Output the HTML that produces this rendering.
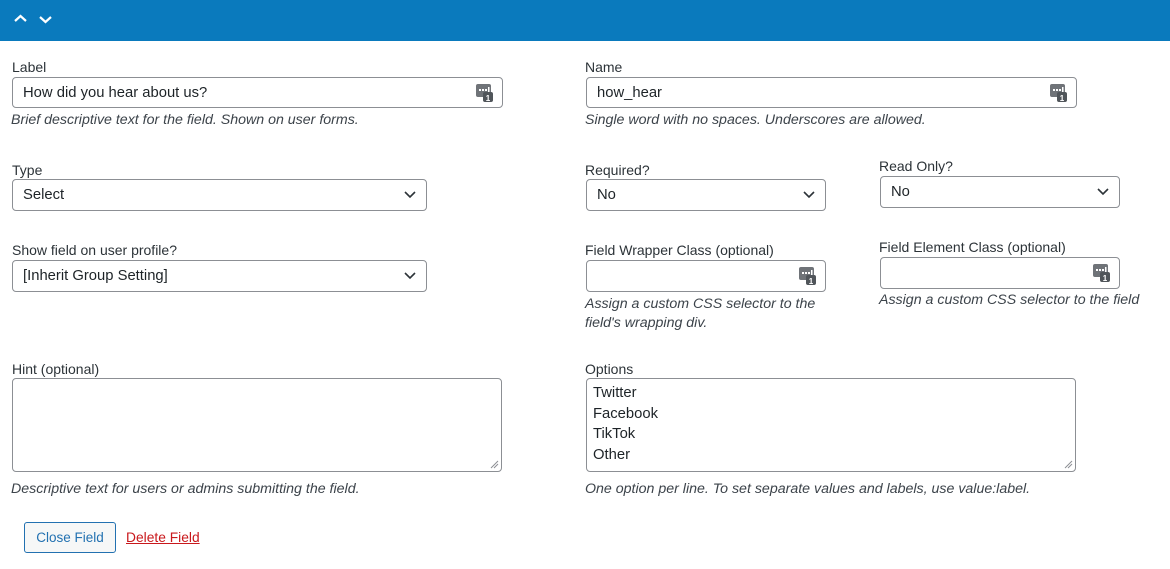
<!DOCTYPE html>
<html><head><meta charset="utf-8"><style>
*{box-sizing:border-box;margin:0;padding:0}
body{width:1170px;height:569px;background:#fff;font-family:"Liberation Sans",sans-serif;color:#1d2327;position:relative;overflow:hidden}
.hd{position:absolute;left:0;top:0;width:1170px;height:41px;background:#0a7abd}
.a{position:absolute;white-space:nowrap}
.l{font-size:14px;color:#2c3338}
.h{font-size:14.2px;font-style:italic;color:#3c434a}
.box{position:absolute;border:1px solid #8c8f94;border-radius:4px;background:#fff;font-size:14.8px;color:#1d2327;padding-left:10px;display:flex;align-items:center}
.ico{position:absolute;right:9px;top:50%;margin-top:-9px;width:17px;height:18px}
.chev{position:absolute;right:10px;top:50%;margin-top:-5px}
.rz{position:absolute;right:2px;bottom:2px}
</style></head><body>
<div class="hd">
<svg style="position:absolute;left:13px;top:12px" width="40" height="14" viewBox="0 0 40 14"><path d="M2 9 L7.5 4 L13 9" stroke="#fff" stroke-width="2.2" fill="none"/><path d="M27 5 L32.5 10 L38 5" stroke="#fff" stroke-width="2.2" fill="none"/></svg>
</div>

<svg width="0" height="0" style="position:absolute"><defs><g id="ic"><rect x="0" y="0" width="15" height="13" rx="2" fill="#6f7378"/><rect x="7" y="8" width="10" height="10" rx="2" fill="#50555a"/><text x="12" y="17" font-size="8" font-weight="bold" fill="#fff" text-anchor="middle" font-family="Liberation Sans">1</text><rect x="3" y="5" width="2" height="2" fill="#fff"/><rect x="6" y="5" width="2" height="2" fill="#fff"/><rect x="9" y="5" width="2" height="2" fill="#fff"/><rect x="12" y="3" width="1.5" height="5" fill="#fff"/></g>
<g id="ch"><path d="M1 2 L6 7 L11 2" stroke="#2c3338" stroke-width="1.6" fill="none"/></g>
<g id="rzg"><path d="M1 8 L8 1 M4 8 L8 4" stroke="#8c8f94" stroke-width="1"/></g></defs></svg>

<div class="a l" style="left:12px;top:59px">Label</div>
<div class="box" style="left:12px;top:77px;width:491px;height:31px">How did you hear about us?<svg class="ico" viewBox="0 0 17 18"><use href="#ic"/></svg></div>
<div class="a h" style="left:11px;top:112px">Brief descriptive text for the field. Shown on user forms.</div>

<div class="a l" style="left:585px;top:59px">Name</div>
<div class="box" style="left:586px;top:77px;width:491px;height:31px">how_hear<svg class="ico" viewBox="0 0 17 18"><use href="#ic"/></svg></div>
<div class="a h" style="left:585px;top:112px">Single word with no spaces. Underscores are allowed.</div>

<div class="a l" style="left:12px;top:162px">Type</div>
<div class="box" style="left:12px;top:179px;width:415px;height:32px">Select<svg class="chev" width="12" height="9"><use href="#ch"/></svg></div>

<div class="a l" style="left:585px;top:162px">Required?</div>
<div class="box" style="left:586px;top:179px;width:240px;height:32px">No<svg class="chev" width="12" height="9"><use href="#ch"/></svg></div>

<div class="a l" style="left:879px;top:158px">Read Only?</div>
<div class="box" style="left:880px;top:176px;width:240px;height:32px">No<svg class="chev" width="12" height="9"><use href="#ch"/></svg></div>

<div class="a l" style="left:12px;top:242px">Show field on user profile?</div>
<div class="box" style="left:12px;top:260px;width:415px;height:32px">[Inherit Group Setting]<svg class="chev" width="12" height="9"><use href="#ch"/></svg></div>

<div class="a l" style="left:585px;top:242px">Field Wrapper Class (optional)</div>
<div class="box" style="left:586px;top:260px;width:240px;height:32px"><svg class="ico" viewBox="0 0 17 18"><use href="#ic"/></svg></div>
<div class="a h" style="left:585px;top:295px;line-height:19px">Assign a custom CSS selector to the<br>field's wrapping div.</div>

<div class="a l" style="left:879px;top:239px">Field Element Class (optional)</div>
<div class="box" style="left:880px;top:257px;width:240px;height:32px"><svg class="ico" viewBox="0 0 17 18"><use href="#ic"/></svg></div>
<div class="a h" style="left:879px;top:292px">Assign a custom CSS selector to the field</div>

<div class="a l" style="left:12px;top:361px">Hint (optional)</div>
<div class="box" style="left:12px;top:378px;width:490px;height:94px"><svg class="rz" width="9" height="9"><use href="#rzg"/></svg></div>
<div class="a h" style="left:11px;top:481px">Descriptive text for users or admins submitting the field.</div>

<div class="a l" style="left:585px;top:361px">Options</div>
<div class="box" style="left:586px;top:378px;width:490px;height:94px;display:block;padding:4px 6px;line-height:20.6px">Twitter<br>Facebook<br>TikTok<br>Other<svg class="rz" width="9" height="9"><use href="#rzg"/></svg></div>
<div class="a h" style="left:585px;top:481px">One option per line. To set separate values and labels, use value:label.</div>

<div class="a" style="left:24px;top:522px;width:92px;height:31px;border:1px solid #2271b1;border-radius:3px;background:#f6f7f7;color:#2271b1;font-size:13.5px;display:flex;align-items:center;justify-content:center">Close Field</div>
<div class="a" style="left:126px;top:530px;font-size:13.8px;color:#c9181c;text-decoration:underline">Delete Field</div>
</body></html>
